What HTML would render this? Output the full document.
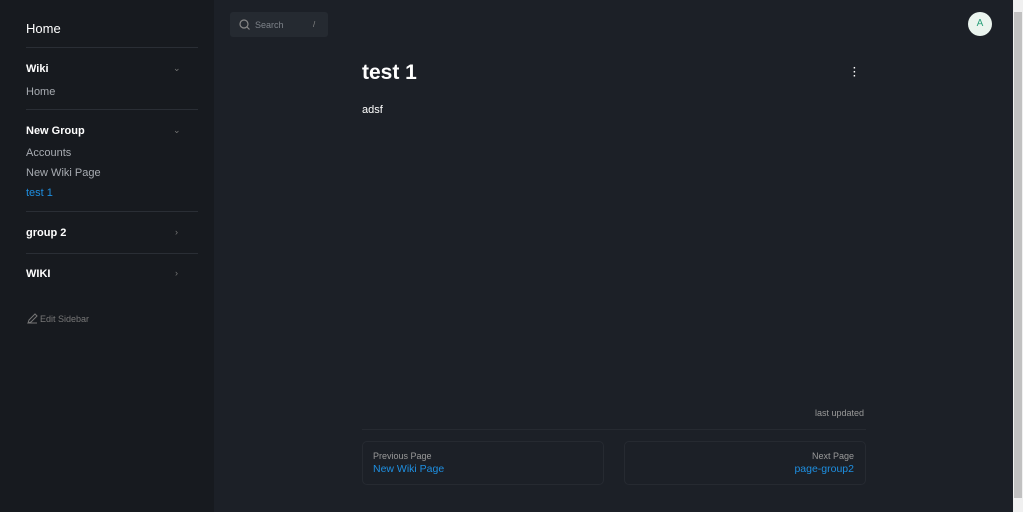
<!DOCTYPE html>
<html><head><style>
*{box-sizing:border-box;margin:0;padding:0}
body{width:1023px;height:512px;overflow:hidden;background:#1c2027;font-family:"Liberation Sans",sans-serif;position:relative}
.sb{position:absolute;left:0;top:0;width:214px;height:512px;background:#171a1f}
.t{position:absolute;white-space:nowrap}
.hr{position:absolute;left:26px;width:172px;height:1px;background:#2a2e35}
.g{color:#fff;font-weight:bold;font-size:11px}
.l{color:#a8acb2;font-size:11px}
.ch{color:#777;font-size:9px}
.scroll{position:absolute;right:0;top:0;width:10px;height:512px;background:#f0f0f0}
.scroll div{position:absolute;left:1px;top:12px;width:8px;height:486px;background:#c1c1c1}
.card{position:absolute;top:441px;width:242px;height:44px;border:1px solid #262a31;border-radius:5px}
</style></head><body>
<div class="sb">
<div class="t" style="left:26px;top:21px;color:#fff;font-size:13px">Home</div>
<div class="hr" style="top:47px"></div>
<div class="t g" style="left:26px;top:63px">Wiki</div><div class="t ch" style="left:173px;top:63px">⌄</div>
<div class="t l" style="left:26px;top:86px">Home</div>
<div class="hr" style="top:109px"></div>
<div class="t g" style="left:26px;top:125px">New Group</div><div class="t ch" style="left:173px;top:125px">⌄</div>
<div class="t l" style="left:26px;top:147px">Accounts</div>
<div class="t l" style="left:26px;top:167px">New Wiki Page</div>
<div class="t" style="left:26px;top:187px;color:#1e8fe1;font-size:11px">test 1</div>
<div class="hr" style="top:211px"></div>
<div class="t g" style="left:26px;top:227px">group 2</div><div class="t ch" style="left:175px;top:227px">›</div>
<div class="hr" style="top:253px"></div>
<div class="t g" style="left:26px;top:268px">WIKI</div><div class="t ch" style="left:175px;top:268px">›</div>
<svg class="t" style="left:27px;top:313px" width="11" height="11" viewBox="0 0 11 11" fill="none" stroke="#777" stroke-width="1"><path d="M1 10L2 7L8 1L10 3L4 9Z M1 10H10"/></svg>
<div class="t" style="left:40px;top:314px;color:#777;font-size:9px">Edit Sidebar</div>
</div>
<div style="position:absolute;left:230px;top:12px;width:98px;height:25px;background:#252a31;border-radius:3px"></div>
<svg class="t" style="left:239px;top:19px" width="11" height="11" viewBox="0 0 11 11" fill="none" stroke="#888" stroke-width="1.2"><circle cx="5" cy="5" r="4"/><path d="M8 8L10.5 10.5"/></svg>
<div class="t" style="left:255px;top:20px;color:#7d8289;font-size:9px">Search</div>
<div class="t" style="left:313px;top:20px;color:#888;font-size:8px">/</div>
<div style="position:absolute;left:968px;top:12px;width:24px;height:24px;border-radius:50%;background:#eaf4ee;color:#2aa07a;font-size:10px;text-align:center;line-height:24px">A</div>
<div class="t" style="left:362px;top:61px;color:#fff;font-size:21px;font-weight:bold">test 1</div>
<div class="t" style="left:853px;top:67px;color:#fff;font-size:10px;line-height:4px;font-weight:bold">·<br>·<br>·</div>
<div class="t" style="left:362px;top:104px;color:#fff;font-size:11px">adsf</div>
<div class="t" style="left:815px;top:408px;color:#999;font-size:9px">last updated</div>
<div style="position:absolute;left:362px;top:429px;width:504px;height:1px;background:#262a31"></div>
<div class="card" style="left:362px"></div><div class="card" style="left:624px"></div>
<div class="t" style="left:373px;top:451px;color:#999;font-size:9px">Previous Page</div>
<div class="t" style="left:373px;top:463px;color:#1e8fe1;font-size:10.5px">New Wiki Page</div>
<div class="t" style="right:169px;top:451px;color:#999;font-size:9px">Next Page</div>
<div class="t" style="right:169px;top:463px;color:#1e8fe1;font-size:10.5px">page-group2</div>
<div class="scroll"><div></div></div>
</body></html>
